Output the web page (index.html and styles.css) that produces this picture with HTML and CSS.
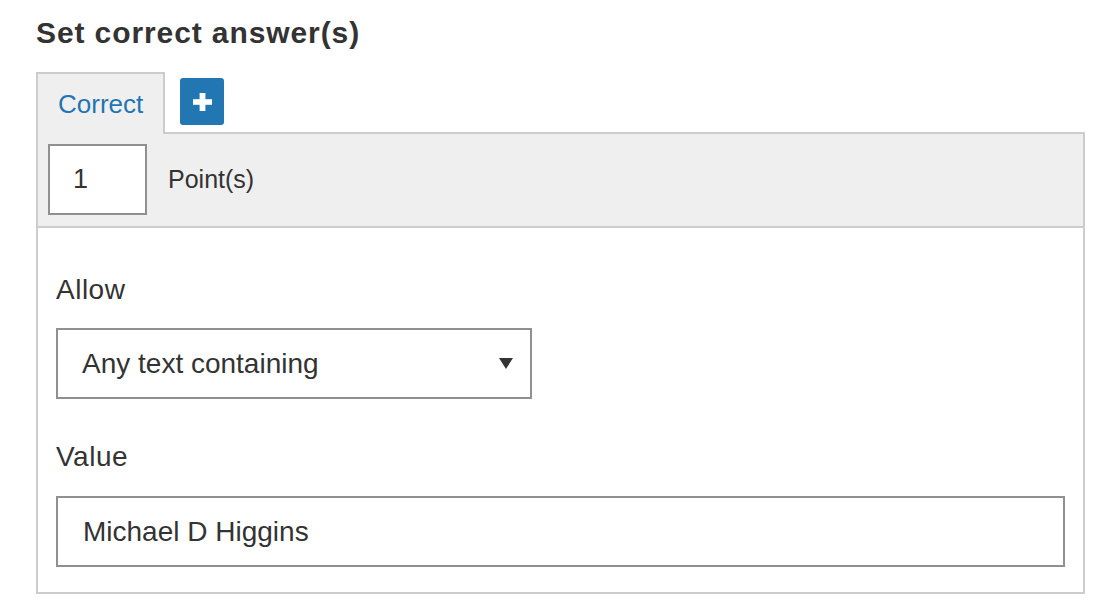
FILE: index.html
```html
<!DOCTYPE html>
<html>
<head>
<meta charset="utf-8">
<link rel="stylesheet" href="styles.css">
</head>
<body>
<div class="page">
  <h2 class="title">Set correct answer(s)</h2>
  <div class="tabs">
    <div class="tab">Correct</div>
    <div class="add-btn">
      <svg width="19" height="18" viewBox="0 0 19 18"><rect x="0" y="6.2" width="19" height="5.6" fill="#fff"/><rect x="6.6" y="0" width="5.8" height="18" fill="#fff"/></svg>
    </div>
  </div>
  <div class="panel">
    <div class="panel-head">
      <div class="points">1</div>
      <span class="points-label">Point(s)</span>
    </div>
    <div class="panel-body">
      <div class="field-label">Allow</div>
      <div class="select"><span>Any text containing</span><span class="caret"></span></div>
      <div class="field-label second">Value</div>
      <div class="text-input">Michael D Higgins</div>
    </div>
  </div>
</div>
</body>
</html>
```
FILE: styles.css
```css
body {
  margin: 0;
  background: #fff;
  color: #333;
  font-family: "Liberation Sans", Arial, Helvetica, sans-serif;
}
.page {
  width: 1049px;
  padding: 15px 0 0 36px;
}
.title {
  margin: 0;
  font-size: 30px;
  line-height: 36px;
  font-weight: bold;
  letter-spacing: 0.9px;
  color: #333;
}
.tabs {
  display: flex;
  align-items: flex-start;
  margin-top: 21px;
  margin-bottom: -2px;
  position: relative;
  z-index: 1;
}
.tab {
  box-sizing: border-box;
  height: 62px;
  padding: 0 20px;
  border: 2px solid #ccc;
  border-bottom: 0;
  background: #efefef;
  color: #1f76b2;
  font-size: 26px;
  line-height: 60px;
}
.add-btn {
  margin: 6px 0 0 15px;
  width: 44px;
  height: 47px;
  border-radius: 3px;
  background: #2277b3;
  display: flex;
  align-items: center;
  justify-content: center;
}
.panel {
  border: 2px solid #ccc;
}
.panel-head {
  display: flex;
  align-items: center;
  padding: 10px 10px 11px;
  background: #efefef;
  border-bottom: 2px solid #ccc;
}
.points {
  box-sizing: border-box;
  width: 99px;
  height: 71px;
  border: 2px solid #909090;
  background: #fff;
  padding-left: 23px;
  font-size: 27px;
  line-height: 67px;
}
.points-label {
  margin-left: 21px;
  font-size: 25px;
}
.panel-body {
  padding: 45px 18px 25px;
}
.field-label {
  font-size: 28px;
  line-height: 34px;
  letter-spacing: 0.5px;
  margin-bottom: 21px;
}
.field-label.second {
  margin-top: 41px;
  margin-bottom: 22px;
}
.select {
  box-sizing: border-box;
  width: 476px;
  height: 71px;
  border: 2px solid #909090;
  padding: 0 17px 0 24px;
  display: flex;
  align-items: center;
  justify-content: space-between;
  font-size: 28px;
}
.caret {
  width: 0;
  height: 0;
  border-left: 7px solid transparent;
  border-right: 7px solid transparent;
  border-top: 11px solid #333;
}
.text-input {
  box-sizing: border-box;
  height: 71px;
  border: 2px solid #909090;
  padding-left: 25px;
  display: flex;
  align-items: center;
  font-size: 28px;
}
```
